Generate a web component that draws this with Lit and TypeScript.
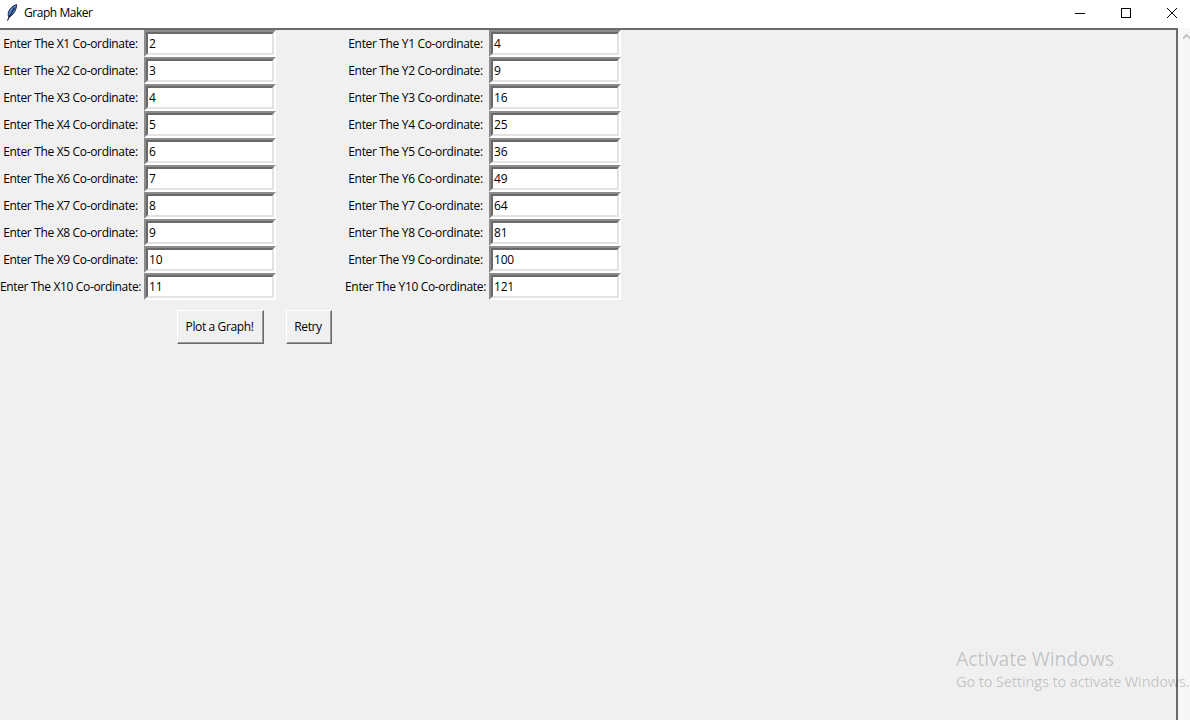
import { LitElement, html, css } from "lit";
import { customElement } from "lit/decorators.js";

const xs = [2, 3, 4, 5, 6, 7, 8, 9, 10, 11];
const ys = [4, 9, 16, 25, 36, 49, 64, 81, 100, 121];

@customElement("app-root")
export class AppRoot extends LitElement {
  static styles = css`
    :host {
      display: block;
      width: 1190px;
      height: 720px;
      overflow: hidden;
      position: relative;
      background: #fff;
      font-family: "Open Sans", "Noto Sans", sans-serif;
      font-size: 12px;
      color: #000;
    }
    .title {
      box-sizing: border-box;
      height: 28px;
      padding-bottom: 3px;
      display: flex;
      align-items: center;
      background: #fff;
    }
    .feather { width: 12px; height: 18px; margin: 0 0 0 6px; flex: none; }
    .title-text { margin-left: 6px; letter-spacing: -0.45px; }
    .controls { margin-left: auto; margin-right: -5px; display: flex; }
    .ctl { width: 46px; height: 25px; display: flex; align-items: center; justify-content: center; }
    .body { display: flex; height: 692px; }
    .client {
      width: 1176px;
      border-top: 2px solid #6b6b6b;
      border-right: 2px solid #6b6b6b;
      background: #f0f0f0;
    }
    .scroll { flex: 1; background: #f7f7f7; padding: 6px 0 0 5px; }
    .scroll svg { display: block; }
    .rows {
      display: grid;
      grid-template-columns: 144px 132px 69px 144px 132px;
      grid-auto-rows: 27px;
      justify-content: start;
    }
    .lbl {
      box-sizing: border-box;
      padding-right: 3px;
      display: flex;
      align-items: center;
      justify-content: center;
      white-space: nowrap;
      letter-spacing: -0.34px;
    }
    .entry {
      box-sizing: border-box;
      height: 27px;
      border-style: solid;
      border-width: 2px;
      border-color: #8c8c8c #fff #fff #8c8c8c;
      display: flex;
    }
    .entry-in {
      flex: 1;
      border-style: solid;
      border-width: 2px;
      border-color: #696969 #e3e3e3 #e3e3e3 #696969;
      background: #fff;
      padding-left: 1px;
      line-height: 19px;
      letter-spacing: -0.2px;
    }
    .buttons {
      display: flex;
      gap: 22px;
      padding: 10px 0 0 177px;
    }
    button {
      all: unset;
      box-sizing: border-box;
      height: 34px;
      padding: 0 2px 2px 0;
      text-align: center;
      font: inherit;
      letter-spacing: -0.38px;
      background: #f0f0f0;
      border-style: solid;
      border-width: 1px;
      border-color: #fff #696969 #696969 #fff;
      box-shadow: inset -1px -1px 0 #9a9a9a;
    }
    .plot { width: 87px; }
    .retry { width: 46px; }
    .wm {
      position: absolute;
      left: 956px;
      top: 646px;
      color: rgba(0, 0, 0, 0.2);
      white-space: nowrap;
    }
    .wm-a { font-size: 19.5px; line-height: 26px; letter-spacing: -0.14px; }
    .wm-b { font-size: 14.5px; line-height: 20px; letter-spacing: -0.12px; }
  `;

  render() {
    return html`
      <div class="title">
        <svg class="feather" viewBox="0 0 12 18">
          <path d="M10.6 0.6 C7 1.4 3.6 4.4 2.5 8.2 C2 10.2 2.2 12 2.8 13 C6 12 9 8.2 10 4.6 C10.5 3 10.8 1.6 10.6 0.6 Z" fill="#5a86c8" stroke="#10204a" stroke-width="1"/>
          <path d="M8.6 3.4 L1.4 16.6" stroke="#0a1430" stroke-width="1.1" fill="none"/>
        </svg>
        <span class="title-text">Graph Maker</span>
        <div class="controls">
          <div class="ctl">
            <svg width="10" height="10" viewBox="0 0 10 10"><path d="M0 5.5H10" stroke="#000" stroke-width="1"/></svg>
          </div>
          <div class="ctl">
            <svg width="10" height="10" viewBox="0 0 10 10"><rect x="0.5" y="0.5" width="9" height="9" fill="none" stroke="#000"/></svg>
          </div>
          <div class="ctl">
            <svg width="10" height="10" viewBox="0 0 10 10"><path d="M0 0L10 10M10 0L0 10" stroke="#000" stroke-width="1"/></svg>
          </div>
        </div>
      </div>
      <div class="body">
        <div class="client">
          <div class="rows">
            ${xs.map(
              (x, i) => html`
                <div class="lbl">Enter The X${i + 1} Co-ordinate:</div>
                <div class="entry"><div class="entry-in">${x}</div></div>
                <div></div>
                <div class="lbl">Enter The Y${i + 1} Co-ordinate:</div>
                <div class="entry"><div class="entry-in">${ys[i]}</div></div>
              `
            )}
          </div>
          <div class="buttons">
            <button class="plot">Plot a Graph!</button>
            <button class="retry">Retry</button>
          </div>
        </div>
        <div class="scroll">
          <svg width="7" height="6" viewBox="0 0 7 6"><path d="M0 4.5L3.5 1L7 4.5" fill="none" stroke="#c4c4c4" stroke-width="2"/></svg>
        </div>
      </div>
      <div class="wm">
        <div class="wm-a">Activate Windows</div>
        <div class="wm-b">Go to Settings to activate Windows.</div>
      </div>
    `;
  }
}
